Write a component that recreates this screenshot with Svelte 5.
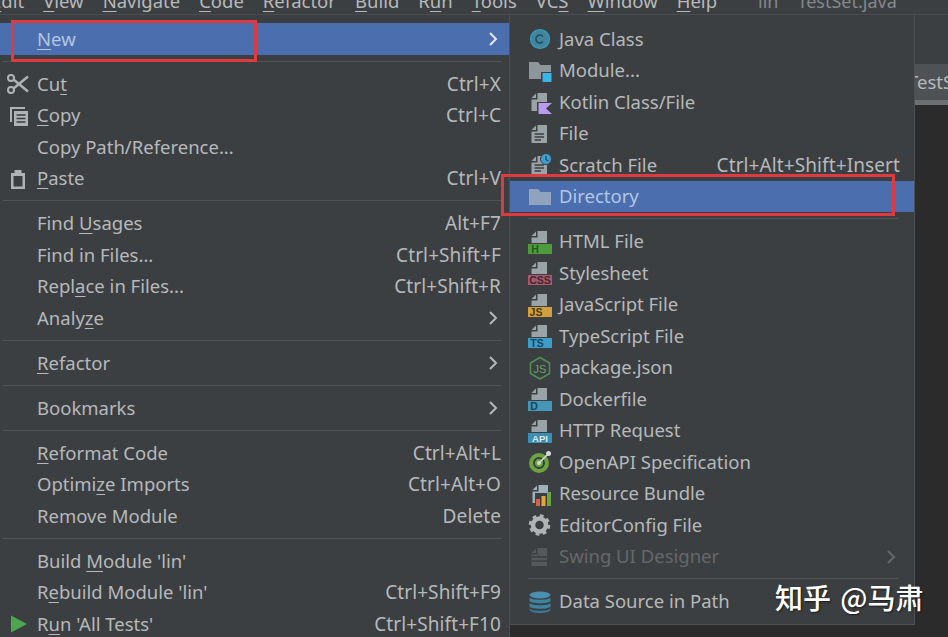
<script>
  const menuBar = ["Edit", "View", "Navigate", "Code", "Refactor", "Build", "Run", "Tools", "VCS", "Window", "Help"];
  const marks = { Edit: 0, View: 0, Navigate: 0, Code: 0, Refactor: 0, Build: 0, Run: 1, Tools: 0, VCS: 2, Window: 0, Help: 0 };

  // _ foran en bokstav gir understrek
  const left = [
    { label: "_New", arrow: true, active: true },
    { sep: true },
    { label: "Cu_t", key: "Ctrl+X", icon: "cut" },
    { label: "_Copy", key: "Ctrl+C", icon: "copy" },
    { label: "Copy Path/Reference..." },
    { label: "_Paste", key: "Ctrl+V", icon: "paste" },
    { sep: true },
    { label: "Find _Usages", key: "Alt+F7" },
    { label: "Find in Files...", key: "Ctrl+Shift+F" },
    { label: "Repl_ace in Files...", key: "Ctrl+Shift+R" },
    { label: "Analy_ze", arrow: true },
    { sep: true },
    { label: "_Refactor", arrow: true },
    { sep: true },
    { label: "Bookmarks", arrow: true },
    { sep: true },
    { label: "_Reformat Code", key: "Ctrl+Alt+L" },
    { label: "Optimi_ze Imports", key: "Ctrl+Alt+O" },
    { label: "Remove Module", key: "Delete" },
    { sep: true },
    { label: "Build _Module 'lin'" },
    { label: "R_ebuild Module 'lin'", key: "Ctrl+Shift+F9" },
    { label: "R_un 'All Tests'", key: "Ctrl+Shift+F10", icon: "run" }
  ];

  const sub = [
    { label: "Java Class", icon: "java" },
    { label: "Module...", icon: "module" },
    { label: "Kotlin Class/File", icon: "kotlin" },
    { label: "File", icon: "file" },
    { label: "Scratch File", key: "Ctrl+Alt+Shift+Insert", icon: "scratch" },
    { label: "Directory", icon: "folder", active: true },
    { sep: true },
    { label: "HTML File", icon: "badge", badge: "H", x: 7, color: "#4f9a3d", ink: "#1f5a1c" },
    { label: "Stylesheet", icon: "badge", badge: "CSS", x: 12, color: "#a8596e", ink: "#46262f" },
    { label: "JavaScript File", icon: "badge", badge: "JS", x: 8, color: "#d19f3c", ink: "#4a3a16" },
    { label: "TypeScript File", icon: "badge", badge: "TS", x: 9, color: "#3e9cc8", ink: "#17465e" },
    { label: "package.json", icon: "node" },
    { label: "Dockerfile", icon: "badge", badge: "D", x: 6, color: "#4597b8", ink: "#17465e" },
    { label: "HTTP Request", icon: "api" },
    { label: "OpenAPI Specification", icon: "openapi" },
    { label: "Resource Bundle", icon: "bundle" },
    { label: "EditorConfig File", icon: "gear" },
    { label: "Swing UI Designer", icon: "swing", arrow: true, dim: true },
    { sep: true },
    { label: "Data Source in Path", icon: "db" }
  ];

  function parts(label) {
    const i = label.indexOf("_");
    if (i < 0) return [label, "", ""];
    return [label.slice(0, i), label[i + 1], label.slice(i + 2)];
  }
</script>

{#snippet page(fill)}
  <path d="M8 3.5 L3.5 8 H8 Z" fill={fill} />
  <path d="M9.5 3 H19 V21 H3.5 V9.5 H9.5 Z" fill={fill} />
{/snippet}

{#snippet lines()}
  <path d="M6.5 12 H16 M6.5 15 H16 M6.5 18 H13" stroke="#3c3f41" stroke-width="1.4" fill="none" />
{/snippet}

{#snippet glyph(item)}
  <svg class="ico" viewBox="0 0 24 24" aria-hidden="true">
    {#if item.icon === "cut"}
      <circle cx="5" cy="6" r="3" fill="none" stroke="#aeb3b6" stroke-width="2" />
      <circle cx="5" cy="18" r="3" fill="none" stroke="#aeb3b6" stroke-width="2" />
      <path d="M7.5 7.5 L22 19.5 M7.5 16.5 L22 4.5" stroke="#aeb3b6" stroke-width="2.4" fill="none" />
    {:else if item.icon === "copy"}
      <path d="M4 3 H19 V5 H6 V18 H4 Z" fill="#aeb3b6" />
      <rect x="8" y="7" width="14" height="15" fill="#aeb3b6" />
      <path d="M10.5 11 H19.5 M10.5 14.5 H19.5 M10.5 18 H19.5" stroke="#3c3f41" stroke-width="1.4" />
    {:else if item.icon === "paste"}
      <path d="M5 6 H19 V22 H5 Z M7.5 9 V19.5 H16.5 V9 Z" fill="#aeb3b6" fill-rule="evenodd" />
      <rect x="8.5" y="3" width="7" height="5" fill="#aeb3b6" />
    {:else if item.icon === "run"}
      <path d="M5 3.5 L21 12 L5 20.5 Z" fill="#4ba84f" />
    {:else if item.icon === "java"}
      <circle cx="12" cy="12" r="9.5" fill="#40869f" stroke="#3a9cc0" stroke-width="1.2" />
      <path d="M15 9.4 A4 4 0 1 0 15 14.6" fill="none" stroke="#234a5c" stroke-width="1.5" />
    {:else if item.icon === "module"}
      <path d="M1 3 H10 L12.5 6 H23 V20 H1 Z" fill="#8e969b" />
      <rect x="13" y="13" width="11" height="10" fill="#3c3f41" />
      <rect x="14.5" y="14" width="9" height="9" fill="#3bb4e8" />
    {:else if item.icon === "kotlin"}
      {@render page("#9aa3a8")}
      <rect x="9" y="12" width="15" height="12" fill="#3c3f41" />
      <path d="M10.500 13 H24 L18 18.500 L24 24 H10.500 Z" fill="#b79cf0" />
    {:else if item.icon === "file"}
      {@render page("#9aa3a8")}
      {@render lines()}
    {:else if item.icon === "scratch"}
      {@render page("#9aa3a8")}
      {@render lines()}
      <circle cx="18" cy="6" r="5.5" fill="#3f9fd0" stroke="#3c3f41" />
      <path d="M18 3 V6.5 L20.5 8" stroke="#1f4458" stroke-width="1.2" fill="none" />
    {:else if item.icon === "folder"}
      <path d="M1 4 H10 L12.5 7 H23 V20 H1 Z" fill="#8fa3bd" />
    {:else if item.icon === "badge"}
      <g transform="translate(0 -2)">{@render page("#9aa3a8")}</g>
      <rect x="0" y="13" width="24" height="1" fill="#3c3f41" />
      <rect x="0" y="14" width="24" height="10" fill={item.color} />
      <text x={item.x} y="23.200" text-anchor="middle" font-size="10.500" font-weight="700" fill={item.ink} font-family="Liberation Sans, sans-serif">{item.badge}</text>
    {:else if item.icon === "api"}
      <g transform="translate(0 -2)">{@render page("#9aa3a8")}</g>
      <rect x="0" y="13" width="24" height="1" fill="#3c3f41" />
      <rect x="0" y="14" width="24" height="10" fill="#3a8fb4" />
      <text x="12" y="23" text-anchor="middle" font-size="9.500" font-weight="700" fill="#dfe9ee" font-family="Liberation Sans, sans-serif">API</text>
    {:else if item.icon === "node"}
      <path d="M12 1.5 L21.5 7 V17.5 L12 23 L2.5 17.5 V7 Z" fill="none" stroke="#4f8f54" stroke-width="1.6" />
      <text x="12" y="16.500" text-anchor="middle" font-size="11" fill="#6aa06c" font-family="Liberation Sans, sans-serif">JS</text>
    {:else if item.icon === "openapi"}
      <circle cx="11" cy="13" r="10" fill="#6aa53e" />
      <circle cx="11" cy="13" r="5" fill="none" stroke="#3c3f41" stroke-width="2" />
      <path d="M11 13 L20 4" stroke="#d5d8da" stroke-width="1.6" />
      <circle cx="11" cy="13" r="2" fill="#d5d8da" />
      <circle cx="20.5" cy="3.5" r="2.5" fill="#d5d8da" />
    {:else if item.icon === "bundle"}
      <g transform="translate(1 0)">{@render page("#9fb0ba")}</g>
      <rect x="7" y="11" width="17" height="13" fill="#3c3f41" />
      <rect x="8" y="17" width="4" height="7" fill="#d9603c" />
      <rect x="13.5" y="14" width="4" height="10" fill="#e2a63c" />
      <rect x="19" y="10" width="4" height="14" fill="#69a83f" />
    {:else if item.icon === "gear"}
      <circle cx="11.500" cy="12" r="6.500" fill="none" stroke="#aeb3b6" stroke-width="4.500" />
      <circle cx="11.500" cy="12" r="9" fill="none" stroke="#aeb3b6" stroke-width="3.500" stroke-dasharray="3.600 3.470" />
    {:else if item.icon === "swing"}
      <g opacity="0.55">
        {@render page("#6a6e70")}
        <path d="M3.5 12 H19 M3.5 16 H19" stroke="#3c3f41" stroke-width="1.5" />
      </g>
    {:else if item.icon === "db"}
      <ellipse cx="12" cy="5" rx="10.500" ry="3.500" fill="#4b8fb0" />
      <path d="M1.500 7.500 C3 10.500 21 10.500 22.500 7.500 V11 C21 14 3 14 1.500 11 Z" fill="#3f83a3" />
      <path d="M1.500 13 C3 16 21 16 22.500 13 V16.500 C21 19.500 3 19.500 1.500 16.500 Z" fill="#3f83a3" />
      <path d="M1.500 18.500 C3 21.500 21 21.500 22.500 18.500 V20 C21 24 3 24 1.500 20 Z" fill="#3a7a98" />
    {/if}
  </svg>
{/snippet}

{#snippet row(item)}
  {#if item.sep}
    <div class="sep"><span></span></div>
  {:else}
    {@const p = parts(item.label)}
    <div class="row" class:active={item.active} class:dim={item.dim}>
      {#if item.icon}<span class="slot">{@render glyph(item)}</span>{/if}
      <span class="label">{p[0]}<u>{p[1]}</u>{p[2]}</span>
      {#if item.key}<span class="key">{item.key}</span>{/if}
      {#if item.arrow}
        <svg class="arrow" viewBox="0 0 10 16" aria-hidden="true"><path d="M2 2 L8 8 L2 14" fill="none" stroke="currentColor" stroke-width="2" /></svg>
      {/if}
    </div>
  {/if}
{/snippet}

<div class="screen">
  <div class="menubar">
    {#each menuBar as name}
      {@const i = marks[name]}
      <span>{name.slice(0, i)}<u>{name[i]}</u>{name.slice(i + 1)}</span>
    {/each}
    <span class="crumb first">lin</span>
    <span class="crumb">TestSet.java</span>
  </div>

  <div class="body">
    <div class="menu left">
      {#each left as item}{@render row(item)}{/each}
    </div>

    <div class="menu sub">
      {#each sub as item}{@render row(item)}{/each}
    </div>

    <div class="side">
      <div class="tabs"><div class="tab">TestS</div></div>
    </div>

    <div class="box box-new"></div>
    <div class="box box-dir"></div>
  </div>

  <div class="mark">知乎 @马肃</div>
</div>

<style>
  :global(body) {
    margin: 0;
    background: #2b2b2b;
  }
  .screen {
    position: relative;
    width: 948px;
    height: 637px;
    overflow: hidden;
    background: #2b2b2b;
    color: #b6b9bb;
    font-family: "Noto Sans", "Open Sans", sans-serif;
    font-size: 18.5px;
  }
  .menubar {
    display: flex;
    height: 14px;
    gap: 19px;
    margin-left: -9px;
    line-height: 20px;
    background: #3c3f41;
    white-space: nowrap;
  }
  .menubar span {
    margin-top: -9px;
  }
  .menubar .crumb {
    color: #85888a;
    font-size: 18px;
  }
  .menubar .first {
    margin-left: 22px;
  }
  .body {
    position: relative;
    display: flex;
    align-items: flex-start;
    height: 623px;
    border-top: 1px solid #4a4d4f;
    background: #2b2b2b;
  }
  .menu {
    box-sizing: border-box;
    padding-top: 8px;
    background: #3c3f41;
    flex: none;
  }
  .left {
    width: 510px;
    height: 630px;
    border-right: 1px solid #4e5153;
  }
  .sub {
    width: 405px;
    height: 610px;
    border-right: 1px solid #4e5153;
    border-bottom: 1px solid #4e5153;
  }
  .row {
    position: relative;
    display: flex;
    align-items: center;
    box-sizing: border-box;
    height: 31.5px;
    white-space: nowrap;
  }
  .left .row {
    padding: 0 8px 1px 37px;
  }
  .sub .row {
    padding: 0 14px 1px 49px;
  }
  .row.active {
    background: #4b6eaf;
    color: #b3c6e2;
  }
  .row.dim {
    color: #65686a;
  }
  .slot {
    position: absolute;
    top: 4px;
    display: flex;
  }
  .left .slot {
    left: 6px;
  }
  .sub .slot {
    left: 18px;
  }
  .ico {
    width: 24px;
    height: 24px;
  }
  .label {
    flex: 1;
  }
  u {
    text-underline-offset: 3px;
    text-decoration-thickness: 1px;
  }
  .key {
    margin-top: 1px;
    font-size: 19px;
    letter-spacing: 0.1px;
  }
  .arrow {
    position: absolute;
    top: 8px;
    width: 10px;
    height: 16px;
    color: #b4b7b9;
  }
  .left .arrow {
    right: 11px;
  }
  .sub .arrow {
    right: 18px;
    color: #65686a;
  }
  .row.active .arrow {
    color: #e4e8ee;
  }
  .sep {
    display: flex;
    align-items: center;
    height: 13.5px;
  }
  .sep span {
    flex: 1;
    height: 1px;
    background: #515456;
  }
  .left .sep {
    padding: 0 8px 0 3px;
  }
  .sub .sep {
    padding: 0 16px 0 18px;
  }
  .side {
    flex: 1;
    height: 100%;
  }
  .tabs {
    height: 90px;
    box-sizing: border-box;
    padding-top: 49px;
    background: #3c3f41;
  }
  .tab {
    height: 41px;
    box-sizing: border-box;
    border-bottom: 5px solid #6c7073;
    background: #4e5254;
    line-height: 35px;
    text-indent: -7px;
    overflow: hidden;
    white-space: nowrap;
  }
  .box {
    position: absolute;
    box-sizing: border-box;
    border: 3px solid #e0393e;
  }
  .box-new {
    left: 11px;
    top: 5px;
    width: 246px;
    height: 42px;
  }
  .box-dir {
    left: 501px;
    top: 159px;
    width: 394px;
    height: 42px;
  }
  .mark {
    position: absolute;
    left: 775px;
    top: 578px;
    color: #fff;
    font-family: "Noto Sans CJK SC", sans-serif;
    font-size: 28px;
    font-weight: 500;
    line-height: 38px;
    word-spacing: 3px;
    white-space: nowrap;
    text-shadow: 1px 1px 2px rgba(0, 0, 0, 0.6);
  }
</style>
